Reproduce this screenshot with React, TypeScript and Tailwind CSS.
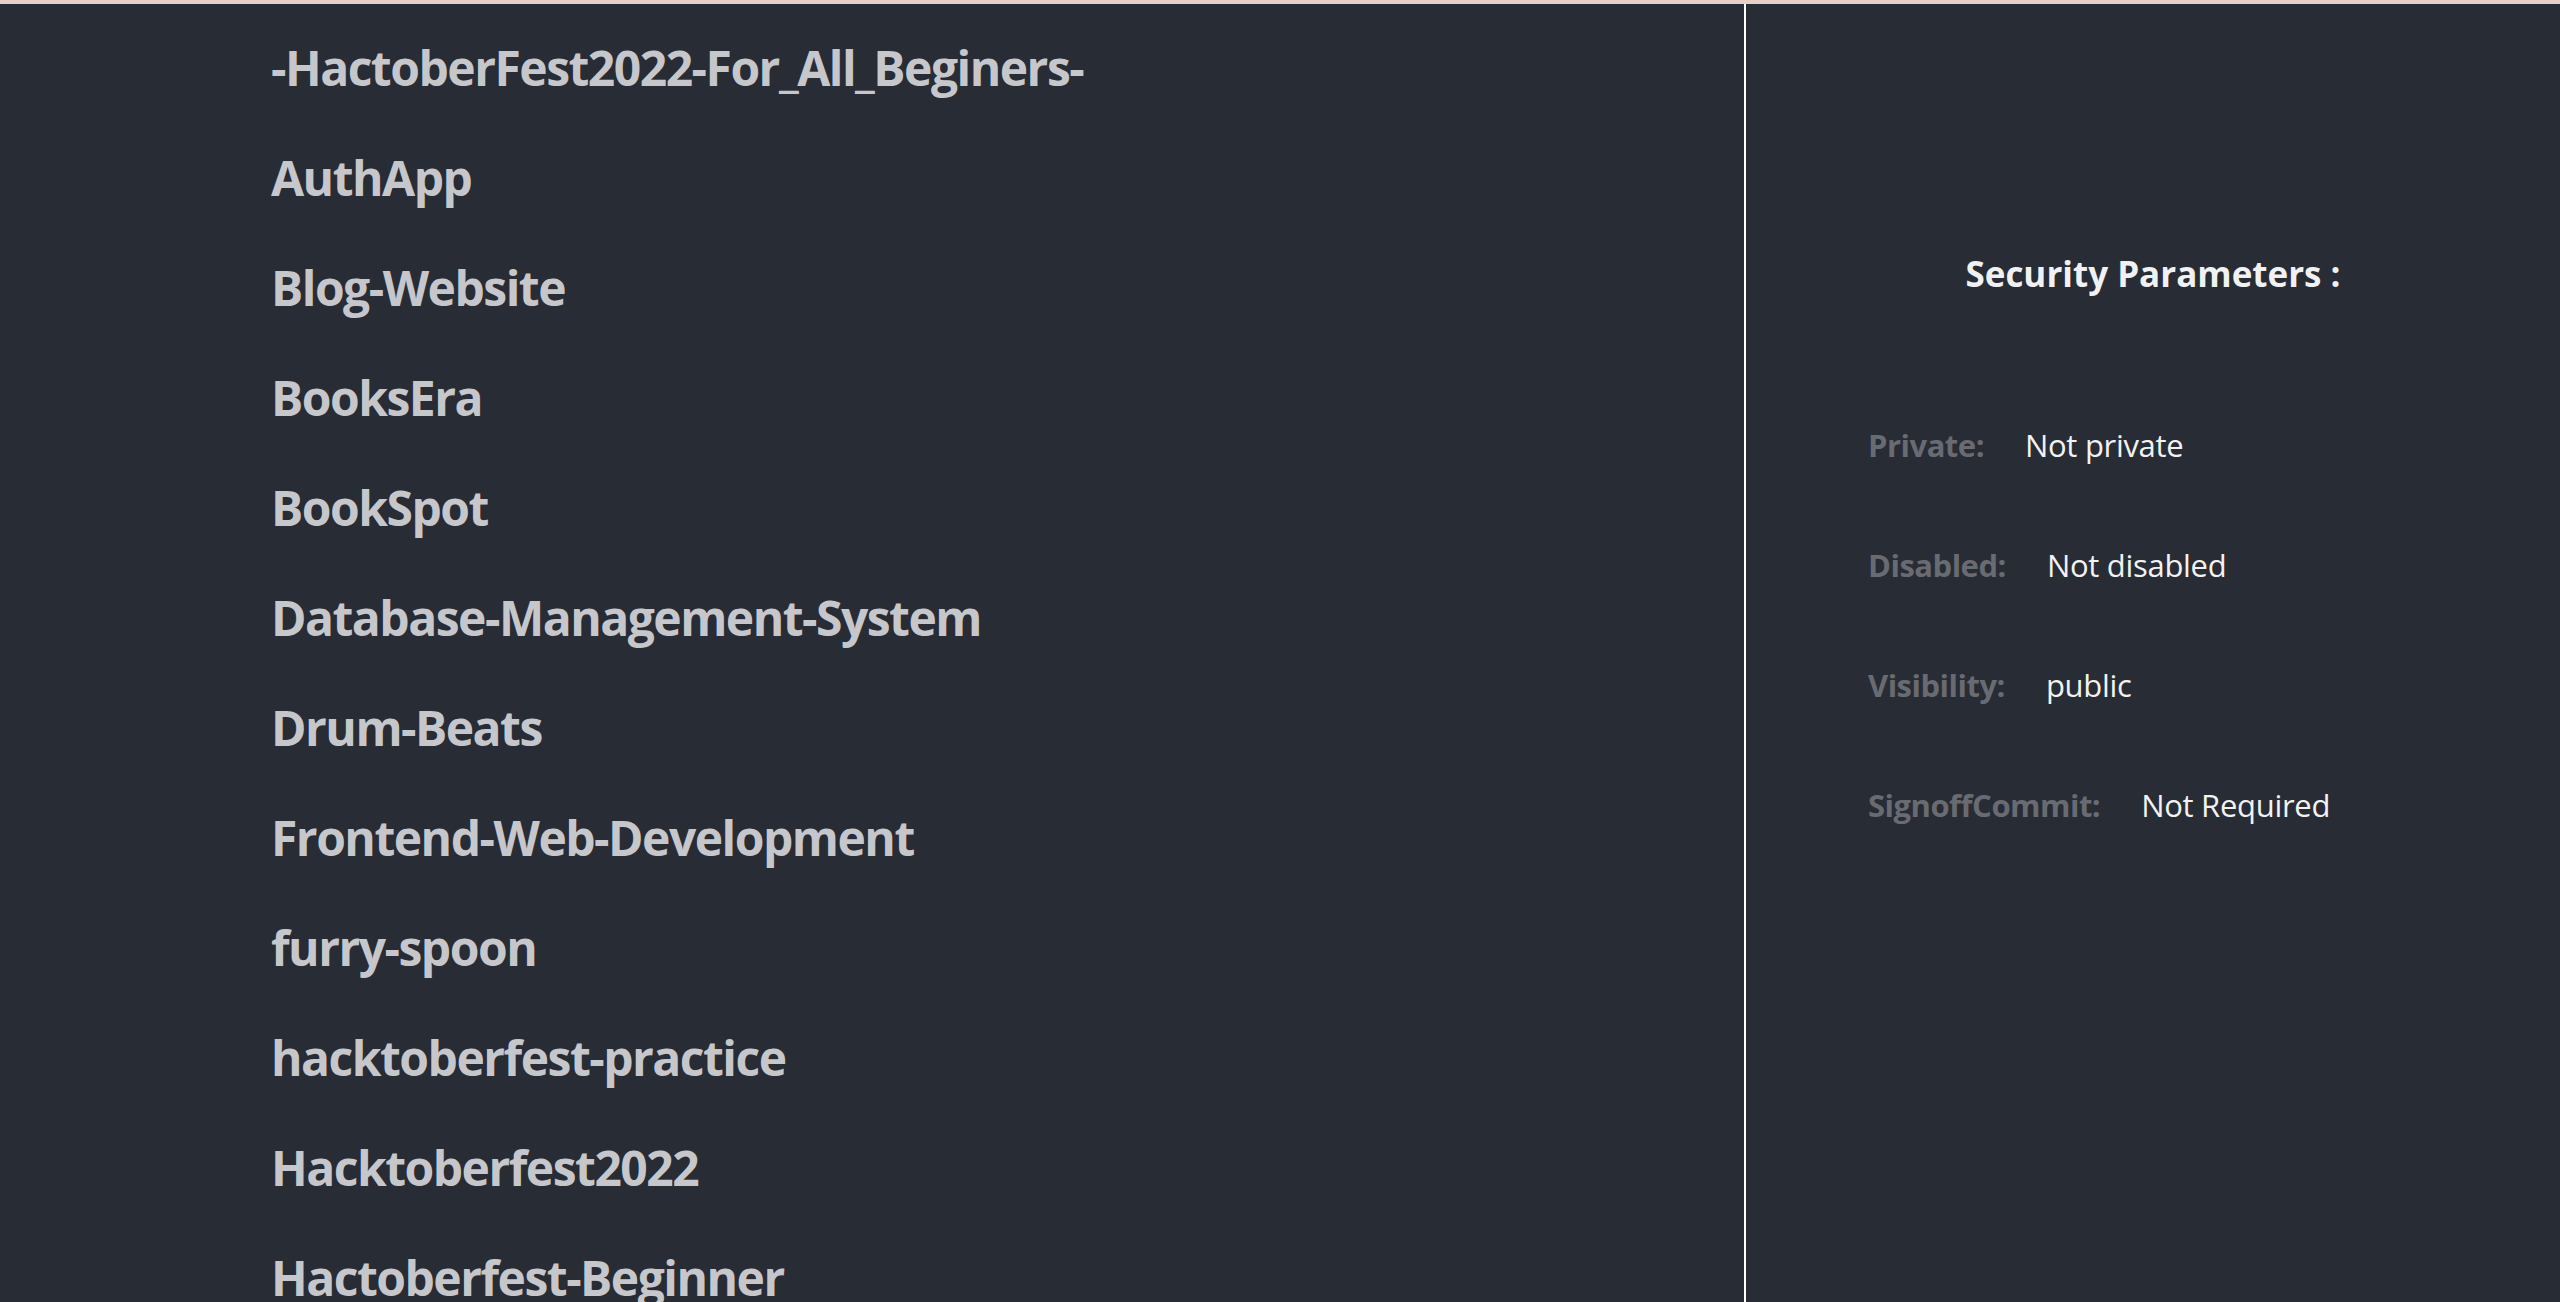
import React from "react";

const repos = [
  "-HactoberFest2022-For_All_Beginers-",
  "AuthApp",
  "Blog-Website",
  "BooksEra",
  "BookSpot",
  "Database-Management-System",
  "Drum-Beats",
  "Frontend-Web-Development",
  "furry-spoon",
  "hacktoberfest-practice",
  "Hacktoberfest2022",
  "Hactoberfest-Beginner",
];

const params: [string, string][] = [
  ["Private:", "Not private"],
  ["Disabled:", "Not disabled"],
  ["Visibility:", "public"],
  ["SignoffCommit:", "Not Required"],
];

export default function App() {
  return (
    <div
      className="h-[1302px] w-full overflow-hidden bg-[#282c34] border-t-4 border-[#e8cfc6] flex"
      style={{ fontFamily: '"Open Sans", "Noto Sans", sans-serif' }}
    >
      <div className="w-[1744px] shrink-0 pl-[271px] pt-[9px] flex flex-col">
        {repos.map((r) => (
          <h2
            key={r}
            className="text-[48px] leading-[110px] font-bold text-[#c6c7cb] tracking-[-1.5px] whitespace-nowrap"
          >
            {r}
          </h2>
        ))}
      </div>
      <div className="flex-1 border-l-2 border-white flex flex-col">
        <h3 className="pt-[250px] text-center text-[35px] leading-[40px] font-bold text-[#f0f1f2]">
          Security Parameters :
        </h3>
        <div className="mt-[131px] pl-[122px] flex flex-col gap-[80px]">
          {params.map(([k, v]) => (
            <div key={k} className="flex items-baseline gap-[41px] text-[31px] leading-[40px]">
              <span className="font-bold text-[#686b71] tracking-[-0.5px]">{k}</span>
              <span className="text-[#f2f2f2] tracking-[-0.3px]">{v}</span>
            </div>
          ))}
        </div>
      </div>
    </div>
  );
}
